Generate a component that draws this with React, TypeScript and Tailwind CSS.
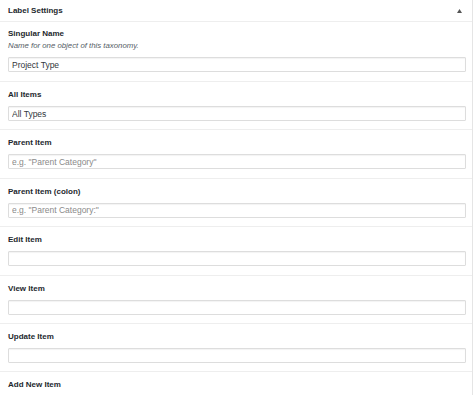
import React from 'react';

type Field = {
  label: string;
  description?: string;
  value?: string;
  placeholder?: string;
};

const fields: Field[] = [
  { label: 'Singular Name', description: 'Name for one object of this taxonomy.', value: 'Project Type' },
  { label: 'All Items', value: 'All Types' },
  { label: 'Parent Item', placeholder: 'e.g. "Parent Category"' },
  { label: 'Parent Item (colon)', placeholder: 'e.g. "Parent Category:"' },
  { label: 'Edit Item' },
  { label: 'View Item' },
  { label: 'Update Item' },
  { label: 'Add New Item' },
];

const App: React.FC = () => {
  return (
    <div
      className="w-[473px] h-[395px] overflow-hidden bg-white border-r border-[#e5e5e5] text-[#23282d]"
      style={{ fontFamily: '"Liberation Sans", Arial, sans-serif' }}
    >
      {/* Header */}
      <div className="h-[22px] flex items-center justify-between pl-[8px] pr-[10px] border-b border-[#eeeeee]">
        <h2 className="text-[8px] font-bold leading-none">Label Settings</h2>
        <svg width="5" height="4" viewBox="0 0 5 4" className="fill-[#555]">
          <polygon points="2.5,0 5,4 0,4" />
        </svg>
      </div>

      {/* Fields */}
      {fields.map((f, i) => (
        <div
          key={f.label}
          className={`px-[8px] border-b border-[#eeeeee] ${i === 0 ? 'pt-[7px] pb-[9px]' : 'pt-[8px] pb-[8.4px]'}`}
        >
          <label className="block text-[8px] font-bold leading-[10px]">{f.label}</label>
          {f.description && (
            <p className="text-[7.8px] italic text-[#555d66] leading-[10px] mt-[2px]">{f.description}</p>
          )}
          <input
            type="text"
            defaultValue={f.value}
            placeholder={f.placeholder}
            className="block w-[458px] h-[15px] mt-[6px] px-[3px] text-[8.5px] text-[#32373c] border border-[#dddddd] rounded-[1px] shadow-[inset_0_1px_1px_rgba(0,0,0,0.05)] placeholder:text-[#8a8a8a] outline-none bg-white"
            style={{ fontFamily: '"Liberation Sans", Arial, sans-serif' }}
          />
        </div>
      ))}
    </div>
  );
};

export default App;
